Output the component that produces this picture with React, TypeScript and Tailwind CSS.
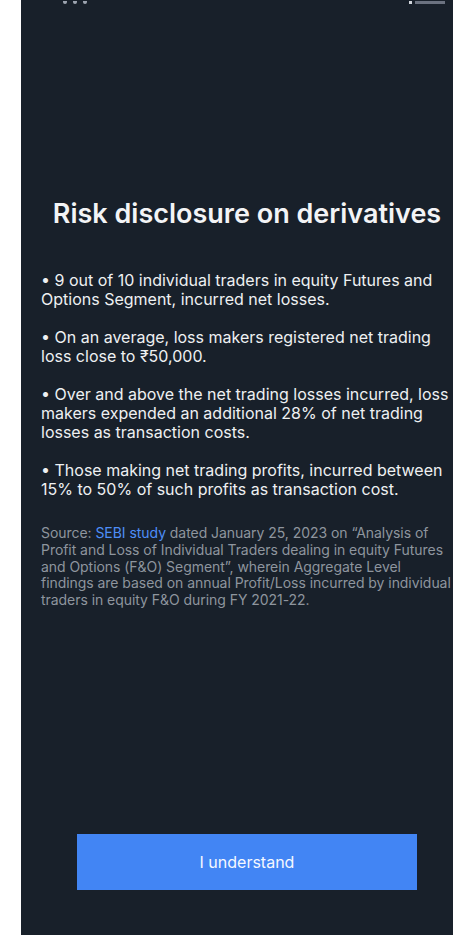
const points = [
  '9 out of 10 individual traders in equity Futures and Options Segment, incurred net losses.',
  'On an average, loss makers registered net trading loss close to ₹50,000.',
  'Over and above the net trading losses incurred, loss makers expended an additional 28% of net trading losses as transaction costs.',
  'Those making net trading profits, incurred between 15% to 50% of such profits as transaction cost.',
]

export default function App() {
  return (
    <div className="min-h-[935px] bg-white px-[21px] font-['Inter','Liberation_Sans',sans-serif]">
      <div className="flex h-[935px] flex-col bg-[#18202a] pl-5">
        {/* cropped status bar */}
        <div className="flex h-[4px] items-end justify-between overflow-hidden pl-[22px] pr-[8px]">
          <div className="flex gap-[6px]">
            <span className="h-[3px] w-[4px] rounded-b bg-[#9ca3af]" />
            <span className="h-[3px] w-[4px] rounded-b bg-[#9ca3af]" />
            <span className="h-[3px] w-[4px] rounded-b bg-[#9ca3af]" />
          </div>
          <div className="flex items-end gap-[3px]">
            <span className="h-[3px] w-[3px] bg-[#d1d5db]" />
            <span className="h-[3px] w-[30px] bg-[#6b7280]" />
          </div>
        </div>

        <h1 className="mt-[191px] text-center text-[27px] font-semibold leading-[38px] text-[#f3f4f6]">
          Risk disclosure on derivatives
        </h1>

        <div className="mt-[38px] flex flex-col gap-[20px] text-[16px] leading-[18.6px] text-[#eef0f2]">
          {points.map((p) => (
            <p key={p}>• {p}</p>
          ))}
        </div>

        <p className="mt-[27px] text-[14px] leading-[16.6px] tracking-[-0.05px] text-[#8e959e]">
          Source: <span className="text-[#4e8ef7]">SEBI study</span> dated January 25, 2023 on
          “Analysis of Profit and Loss of Individual Traders dealing in equity Futures and Options
          (F&amp;O) Segment”, wherein Aggregate Level findings are based on annual Profit/Loss
          incurred by individual traders in equity F&amp;O during FY 2021-22.
        </p>

        <div className="mt-auto mb-[45px] flex justify-center">
          <button className="h-[56px] w-[340px] bg-[#4285f4] text-[16px] text-[#f5f8ff]">
            I understand
          </button>
        </div>
      </div>
    </div>
  )
}
